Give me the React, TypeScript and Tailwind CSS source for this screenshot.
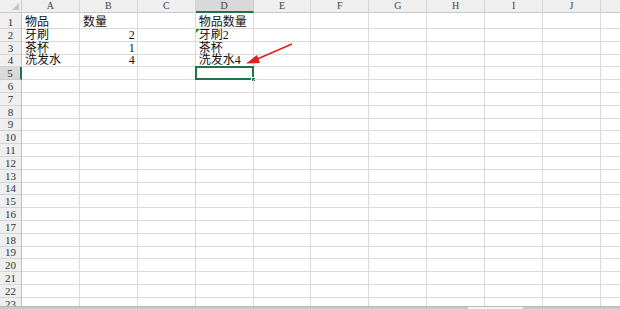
import React from 'react';

const cols = ['A', 'B', 'C', 'D', 'E', 'F', 'G', 'H', 'I', 'J'];

type Cell = { text?: string; right?: boolean; flag?: boolean };

const data: Record<number, Record<string, Cell>> = {
  1: { A: { text: '物品' }, B: { text: '数量' }, D: { text: '物品数量' } },
  2: { A: { text: '牙刷' }, B: { text: '2', right: true }, D: { text: '牙刷2', flag: true } },
  3: { A: { text: '茶杯' }, B: { text: '1', right: true }, D: { text: '茶杯' } },
  4: { A: { text: '洗发水' }, B: { text: '4', right: true }, D: { text: '洗发水4' } },
};

const rows = Array.from({ length: 23 }, (_, i) => i + 1);

const cellFont = { fontFamily: '"Liberation Serif", "Noto Sans CJK SC", serif' };

export default function App() {
  return (
    <div className="relative w-[620px] h-[309px] bg-white overflow-hidden flex flex-col select-none" style={cellFont}>
      <div className="flex-1 overflow-hidden">
        {/* column headers */}
        <div className="flex h-[13px]">
          <div className="relative w-[22px] shrink-0 bg-[#efefef] border-r border-b border-[#c9c9c9]">
            <div className="absolute right-[2px] bottom-[2px] w-0 h-0 border-l-[7px] border-l-transparent border-b-[7px] border-b-[#c4c4c4]" />
          </div>
          {cols.map((c) => (
            <div
              key={c}
              className={`w-[57.9px] shrink-0 flex items-center justify-center text-[10px] leading-none border-r text-[#444] ${
                c === 'D'
                  ? 'bg-[#d9d9d9] border-[#c9c9c9] border-b-2 border-b-[#217346]'
                  : 'bg-[#efefef] border-[#d4d4d4] border-b border-b-[#c9c9c9]'
              }`}
            >
              {c}
            </div>
          ))}
          <div className="flex-1 bg-[#efefef] border-b border-[#c9c9c9]" />
        </div>

        {rows.map((r) => (
          <div key={r} className={`flex ${r === 1 ? 'h-[16px]' : 'h-[12.8px]'}`}>
            <div
              className={`w-[22px] shrink-0 flex items-end justify-center text-[11px] leading-[12px] border-b text-[#333] ${
                r === 5
                  ? 'bg-[#d9d9d9] border-b-[#c9c9c9] border-r-2 border-r-[#217346]'
                  : 'bg-[#efefef] border-b-[#d4d4d4] border-r border-r-[#c0c0c0]'
              }`}
            >
              {r}
            </div>
            {cols.map((c) => {
              const cell = data[r]?.[c];
              const selected = r === 5 && c === 'D';
              return (
                <div
                  key={c}
                  className={`relative w-[57.9px] shrink-0 flex items-end border-r border-b border-[#dadada] text-[12px] leading-[12px] text-[#111] whitespace-nowrap ${
                    cell?.right ? 'justify-end pr-[2px]' : 'pl-[3px]'
                  }`}
                >
                  {cell?.text}
                  {cell?.flag && (
                    <div className="absolute left-0 top-0 w-0 h-0 border-t-[4px] border-t-[#2e8b3e] border-r-[4px] border-r-transparent" />
                  )}
                  {selected && (
                    <>
                      <div className="absolute -left-[1px] -top-[1px] -right-[1px] -bottom-[1px] border-2 border-[#217346]" />
                      <div className="absolute -right-[3px] -bottom-[3px] w-[5px] h-[5px] bg-[#217346] border border-white" />
                    </>
                  )}
                </div>
              );
            })}
            <div className="flex-1 border-b border-[#dadada]" />
          </div>
        ))}
      </div>

      {/* bottom bar */}
      <div className="h-[3px] flex bg-[#f4f4f4] border-t border-[#b9b9b9]">
        <div className="w-[468px] bg-[#c8c8c8]" />
        <div className="w-[55px]" />
        <div className="flex-1 bg-[#c8c8c8]" />
      </div>

      {/* red arrow */}
      <svg className="absolute left-0 top-0 pointer-events-none" width="620" height="309">
        <line x1="292" y1="44" x2="255" y2="60" stroke="#e0201e" strokeWidth="1.6" />
        <polygon points="246,63.5 257,55 260,63" fill="#e0201e" />
      </svg>
    </div>
  );
}
